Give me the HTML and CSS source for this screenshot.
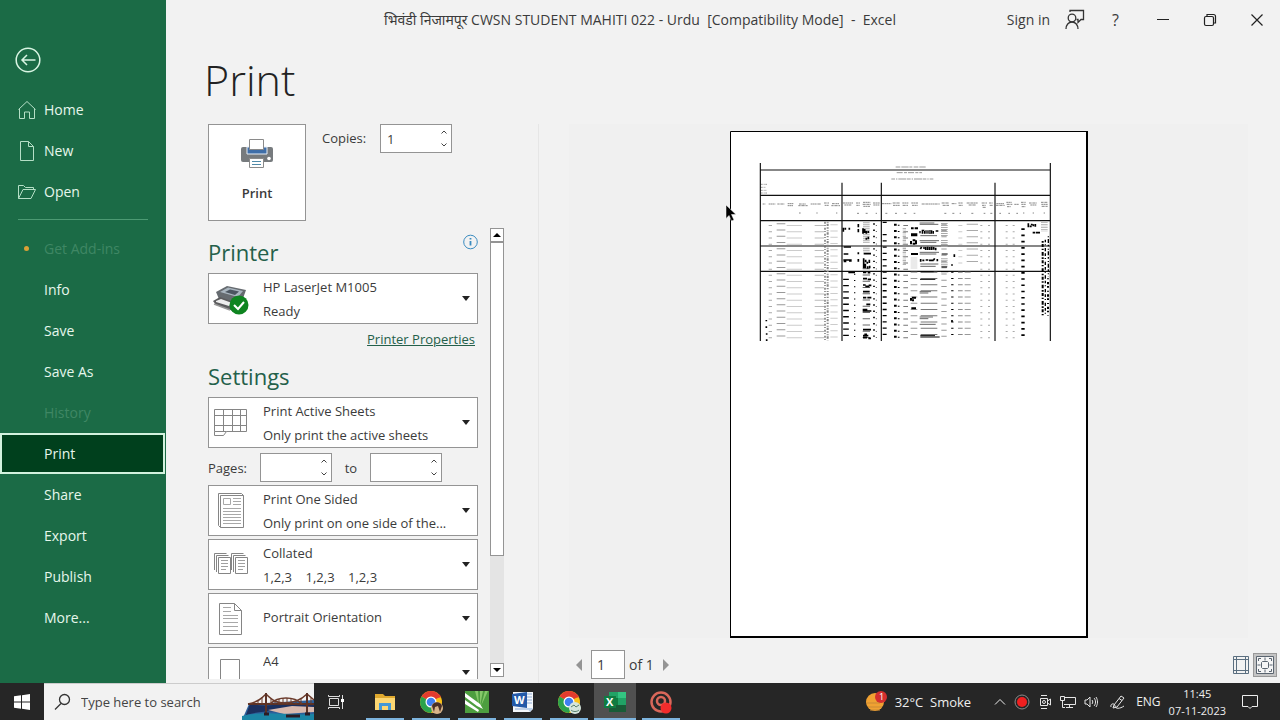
FILE: index.html
```html
<!DOCTYPE html>
<html lang="en">

<head>
  <meta charset="UTF-8">
  <meta name="viewport" content="width=device-width, initial-scale=1.0">
  <title>Print - Excel</title>
  <link rel="stylesheet" href="styles.css">
</head>

<body>
  <div class="backstage">
    <header class="titlebar">
      <div class="doc-title">भिवंडी निजामपूर CWSN STUDENT MAHITI 022 - Urdu&nbsp; [Compatibility Mode]&nbsp; -&nbsp; Excel</div>
      <div class="window-controls">
        <button class="sign-in">Sign in</button>
        <button class="feedback" aria-label="Feedback">
          <svg width="22" height="22" viewBox="0 0 22 22" fill="none" stroke="#333" stroke-width="1.3">
            <circle cx="8" cy="9" r="3.8" />
            <path d="M2 20c0-4 2.5-7 6-7s6 3 6 7M6 3V1.5h13.5v9H17l-3 3v-3h-1.5" />
          </svg>
        </button>
        <button class="win-btn help" aria-label="Help">?</button>
        <button class="win-btn" aria-label="Minimize">
          <svg width="14" height="14" viewBox="0 0 14 14" stroke="#222"><path d="M1 6.5h12" /></svg>
        </button>
        <button class="win-btn" aria-label="Restore">
          <svg width="14" height="14" viewBox="0 0 14 14" fill="none" stroke="#222" stroke-width="1.2">
            <rect x="1.5" y="3.5" width="9" height="9" rx="1.5" />
            <path d="M4 3V1.5h6.5a2 2 0 0 1 2 2V10H11" />
          </svg>
        </button>
        <button class="win-btn" aria-label="Close">
          <svg width="14" height="14" viewBox="0 0 14 14" stroke="#222" stroke-width="1.2"><path d="M1.5 1.5l11 11M12.5 1.5l-11 11" /></svg>
        </button>
      </div>
    </header>

    <nav class="sidebar">
      <button class="back" aria-label="Back">
        <svg width="26" height="26" viewBox="0 0 26 26" fill="none" stroke="#d9f5e3" stroke-width="1.5">
          <circle cx="13" cy="13" r="11.8" />
          <path d="M20.5 13H7M12 8l-5 5 5 5" />
        </svg>
      </button>
      <a class="nav-item" href="#">
        <svg class="nav-icon" width="20" height="20" viewBox="0 0 20 20" fill="none" stroke="#b5dfc6"><path d="M1.5 9.5L10 1.5l8.5 8M2.5 9v9.5h5V12h5v6.5h5V9" /></svg>
        Home
      </a>
      <a class="nav-item" href="#">
        <svg class="nav-icon" width="20" height="20" viewBox="0 0 20 20" fill="none" stroke="#b5dfc6"><path d="M3.5.5h8l5 5v14h-13zM11.5.5v5h5" /></svg>
        New
      </a>
      <a class="nav-item" href="#">
        <svg class="nav-icon" width="20" height="20" viewBox="0 0 20 20" fill="none" stroke="#b5dfc6"><path d="M1.5 16.5v-13h5l2 2h8V8M1.5 16.5L6 7.5h12.5l-4.500 9z" /></svg>
        Open
      </a>
      <hr class="nav-divider">
      <a class="nav-item disabled addins" href="#">Get Add-ins</a>
      <a class="nav-item" href="#">Info</a>
      <a class="nav-item" href="#">Save</a>
      <a class="nav-item" href="#">Save As</a>
      <a class="nav-item disabled" href="#">History</a>
      <a class="nav-item selected" href="#">Print</a>
      <a class="nav-item" href="#">Share</a>
      <a class="nav-item" href="#">Export</a>
      <a class="nav-item" href="#">Publish</a>
      <a class="nav-item" href="#">More...</a>
    </nav>

    <main class="content">
      <h1>Print</h1>
      <div class="columns">
        <section class="print-pane">
          <div class="print-top">
            <button class="print-btn">
              <svg width="34" height="30" viewBox="0 0 34 30">
                <rect x="1" y="8" width="32" height="15" rx="2" fill="#777b7e" />
                <path d="M7 8h20v7H7z" fill="#3f6ea8" stroke="#e8eef5" />
                <path d="M9.5.5h14v10h-14z" fill="#fff" stroke="#8a8a8a" />
                <circle cx="29" cy="19.5" r="1.8" fill="#fff" />
                <path d="M9.5 19.5h14v9h-14z" fill="#fff" stroke="#8a8a8a" />
                <path d="M12 22.5h9M12 25.5h9" stroke="#4f8aa8" />
              </svg>
              Print
            </button>
            <label class="copies-label" for="copies">Copies:</label>
            <div class="spinner">
              <input type="text" id="copies" value="1">
              <div class="spin-btns">
                <button aria-label="More copies"><svg width="6" height="4" viewBox="0 0 6 4"><path d="M.5 3.500L3 1l2.500 2.500" /></svg></button>
                <button aria-label="Fewer copies"><svg width="6" height="4" viewBox="0 0 6 4"><path d="M.5.5L3 3 5.500.5" /></svg></button>
              </div>
            </div>
          </div>

          <div class="scroll-row">
            <div class="options">
              <div class="section-head">
                <h2>Printer</h2>
                <svg class="info" width="15" height="16" viewBox="0 0 15 16" fill="none" stroke="#3b8cc0">
                  <circle cx="7.5" cy="8" r="6.8" />
                  <path d="M7.5 7v4.500M7.5 4v1.500" stroke-width="1.8" />
                </svg>
              </div>
              <div class="combo">
                <select aria-label="Printer"><option>HP LaserJet M1005</option></select>
                <span class="combo-sub">Ready</span>
                <svg class="combo-icon" width="38" height="38" viewBox="0 0 38 38">
                  <path d="M4 12L15 6l19 4-5 14-22-5z" fill="#666b70" />
                  <path d="M8 12l8-4.500 15 3.500-5 6z" fill="#a9b5bf" />
                  <path d="M13 12l5-2.500 9 2-4 3.500z" fill="#4b5560" />
                  <path d="M1 21l7-4 17 6-4 8-17-6z" fill="#5c5c5e" />
                  <path d="M4 21l5-2 11 4-3 3-13-4z" fill="#eee" />
                  <path d="M2 24l16 6" stroke="#999" stroke-width="1.5" />
                  <circle cx="27" cy="25" r="9.5" fill="#0e8420" />
                  <path d="M22 25l4 4 6-7" fill="none" stroke="#fff" stroke-width="2" />
                </svg>
              </div>
              <a class="props-link" href="#">Printer Properties</a>

              <h2>Settings</h2>
              <div class="combo">
                <select aria-label="Print what"><option>Print Active Sheets</option></select>
                <span class="combo-sub">Only print the active sheets</span>
                <svg class="combo-icon" width="38" height="38" viewBox="0 0 38 38" fill="none" stroke="#858585">
                  <path d="M2.5 27.5v-22h32v22h-20l-3 4h-9v-4h12M2.5 11.500h32M2.5 21.500h32M11.5 5.500v22M20.5 5.500v22M28.5 5.500v22" />
                </svg>
              </div>
              <div class="pages-row">
                <label for="pageFrom">Pages:</label>
                <div class="spinner">
                  <input type="text" id="pageFrom">
                  <div class="spin-btns">
                    <button aria-label="From up"><svg width="6" height="4" viewBox="0 0 6 4"><path d="M.5 3.500L3 1l2.500 2.500" /></svg></button>
                    <button aria-label="From down"><svg width="6" height="4" viewBox="0 0 6 4"><path d="M.5.5L3 3 5.500.5" /></svg></button>
                  </div>
                </div>
                <label for="pageTo">to</label>
                <div class="spinner">
                  <input type="text" id="pageTo">
                  <div class="spin-btns">
                    <button aria-label="To up"><svg width="6" height="4" viewBox="0 0 6 4"><path d="M.5 3.500L3 1l2.500 2.500" /></svg></button>
                    <button aria-label="To down"><svg width="6" height="4" viewBox="0 0 6 4"><path d="M.5.5L3 3 5.500.5" /></svg></button>
                  </div>
                </div>
              </div>
              <div class="combo-stack">
                <div class="combo">
                  <select aria-label="Sides"><option>Print One Sided</option></select>
                  <span class="combo-sub">Only print on one side of the...</span>
                  <svg class="combo-icon" width="38" height="38" viewBox="0 0 38 38" fill="none" stroke="#858585">
                    <path d="M8.5 35.500l-2-2v-32h23l2 2M8.5 3.500h23v32h-23z" />
                    <path d="M11.5 6.500h7v6h-7zM21 6.500h8M21 9.500h8M21 12.500h8M11 16.500h18M11 19.500h18M11 22.500h18M11 25.500h18M11 28.500h18M11 31.500h18" stroke="#a8a8a8" />
                  </svg>
                </div>
                <div class="combo">
                  <select aria-label="Collation"><option>Collated</option></select>
                  <span class="combo-sub">1,2,3&nbsp; &nbsp; 1,2,3&nbsp; &nbsp; 1,2,3</span>
                  <svg class="combo-icon" width="38" height="38" viewBox="0 0 38 38" fill="none" stroke="#858585">
                    <path d="M2.5 24V7.500h12M4.5 26V9.500h12M6.5 11.500h12v16h-12zM19.5 24V7.500h12M21.5 26V9.500h12M23.5 11.500h12v16h-12z" />
                    <path d="M9 14.500h7M9 17.500h7M9 20.500h7M9 23.500h5M26 14.500h7M26 17.500h7M26 20.500h7M26 23.500h5" stroke="#a0a0a0" />
                  </svg>
                </div>
                <div class="combo single">
                  <select aria-label="Orientation"><option>Portrait Orientation</option></select>
                  <svg class="combo-icon" width="38" height="38" viewBox="0 0 38 38" fill="none" stroke="#858585">
                    <path d="M7.5 3.500h15l7 7v24h-22zM22.5 3.500v7h7" />
                    <path d="M11 7.500h8M11 11.500h8M11 15.500h15M11 18.500h15M11 22.500h15M11 26.500h15M11 30.500h15" stroke="#a8a8a8" />
                  </svg>
                </div>
                <div class="combo">
                  <select aria-label="Paper size"><option>A4</option></select>
                  <svg class="combo-icon" width="38" height="38" viewBox="0 0 38 38" fill="none" stroke="#858585"><path d="M8.5 5.500h19v28h-19z" /></svg>
                </div>
              </div>
            </div>
            <div class="scrollbar">
              <button aria-label="Scroll up"><svg width="8" height="4" viewBox="0 0 8 4"><path d="M0 4l4-4 4 4z" /></svg></button>
              <div class="thumb"></div>
              <button aria-label="Scroll down"><svg width="8" height="4" viewBox="0 0 8 4"><path d="M0 0h8L4 4z" /></svg></button>
            </div>
          </div>
        </section>

        <section class="preview-pane">
          <div class="preview-area">
            <svg class="sheet" viewBox="31 18 1074 1521" fill="none">
              <path d="M31 18h1074v1521H31z" fill="#fff" />
              <path d="M32.5 1539V19.500H1105" stroke="#000" stroke-width="3" />
              <path d="M34 1536h1068V20" stroke="#000" stroke-width="6" />

              <!-- table rules -->
              <path d="M122 114v534M992 114v534M367 173v475M485 173v475M826 173v475M122 135h870M122 211h870M122 287h870M122 363h870M122 439h870" stroke="#111" stroke-width="3.5" />

              <!-- sheet titles -->
              <g stroke="#999" stroke-width="3">
                <path d="M528 126h90" stroke-dasharray="14 3 22 2 9 4" />
                <path d="M531 143h76" stroke-dasharray="18 4 9 3" />
                <path d="M515 162h126" stroke-dasharray="11 3 4 3 24 2" />
                <path d="M124 178h18M124 187h14M124 196h16M124 204h19" stroke-dasharray="5 3 3 2" />
              </g>

              <!-- column headings -->
              <g stroke="#888" stroke-width="3">
                <path d="M129 237h8M147 237h20M173 237h22M204 236h18M204 242h16M238 237h20M236 242h28M273 237h31M313 234h15M315 241h13M337 236h22M335 242h26" stroke-dasharray="6 1 3 1" />
                <path d="M370 234h30M374 240h22M409 234h12M410 241h10M430 232h22M429 238h24M431 244h20M460 234h20M461 240h18M487 236h28M519 234h22M520 241h21M548 234h18M549 241h16M575 234h20M577 241h17M606 237h54M666 234h22M669 241h19M696 236h14M716 234h14M717 241h13M741 234h34M747 240h22" stroke-dasharray="7 1 4 1" />
                <path d="M786 234h16M787 241h12M789 247h10M808 234h12M810 241h10M830 236h24M829 241h26M860 232h16M861 238h17M862 245h12M884 238h14M904 232h14M905 238h14M906 245h12M928 234h24M932 240h18M964 232h20M965 238h20M966 244h18" stroke-dasharray="7 1 3 1" />
                <path d="M238 264h5M290 264h4M349 264h4M412 265h6M438 265h6M468 265h4M497 265h6M526 265h6M554 265h6M582 265h5M674 265h6M698 265h6M720 265h4M755 265h6M792 265h5M812 265h6M839 265h5M866 265h5M890 265h5M910 264h4M939 264h4M972 264h4" />
              </g>

              <!-- faint repeating cells, one dashed stroke per column -->
              <g stroke="#ccc" stroke-dasharray="3 15.7">
                <path d="M152 300v346" stroke-width="10" stroke="#aaa" />
                <path d="M184 295v346" stroke-width="26" stroke="#999" />
                <path d="M224 300v346" stroke-width="46" />
                <path d="M299 300v346" stroke-width="28" stroke="#bbb" />
                <path d="M343 298v346" stroke-width="22" />
                <path d="M673 296v346" stroke-width="16" stroke="#999" />
                <path d="M722 440v206" stroke-width="14" stroke="#888" />
                <path d="M744 440v206" stroke-width="18" stroke="#999" />
                <path d="M758 296v128" stroke-width="34" stroke="#aaa" />
                <path d="M722 300v128" stroke-width="12" />
                <path d="M785 300v346M808 300v346M861 300v346M882 300v346" stroke-width="6" stroke="#aaa" />
                <path d="M558 300v346" stroke-width="14" stroke="#777" />
                <path d="M583 440v206" stroke-width="20" stroke="#999" />
                <path d="M628 440v200" stroke-width="50" stroke="#777" />
                <path d="M440 430v216" stroke-width="22" stroke="#666" />
              </g>
              <g stroke="#666" stroke-width="13">
                <path d="M316 290v356" stroke-width="4" stroke-dasharray="6 4 3 5" />
                <path d="M324 290v356" stroke-width="6" stroke="#888" stroke-dasharray="3 3 7 4 4 5" />
                <path d="M440 292v62M440 368v14" stroke="#aaa" stroke-width="20" stroke-dasharray="3 3" />
                <path d="M554 310v110" stroke="#999" stroke-width="10" stroke-dasharray="3 4 2 3" />
                <path d="M583 398v34" stroke="#aaa" stroke-width="20" stroke-dasharray="2 4" />
                <path d="M674 294v42M674 345v20M674 400v30" stroke="#aaa" stroke-width="20" stroke-dasharray="3 3" />
                <path d="M600 294h44M600 298h56M602 332h50M600 347h58M602 352h48M600 382h58M600 387h50M602 417h54M602 424h46M600 500h34M600 504h26M600 576h40M600 581h26M600 598h48" stroke-width="3" />
                <path d="M974 292v28" stroke="#aaa" stroke-width="20" stroke-dasharray="2 3" />
              </g>

              <!-- heavy marks -->
              <g stroke="#000">
                <path d="M495 290v6M495 327v316" stroke-width="12" stroke-dasharray="4 14.7" />
                <path d="M527 296v350" stroke-width="8" stroke-dasharray="6 12.7" />
                <path d="M537 299v345" stroke-width="5" stroke-dasharray="3 15.7" />
                <path d="M910 310v332" stroke-width="10" stroke-dasharray="5 13.7" />
                <path d="M698 440v206" stroke-width="7" stroke-dasharray="3 15.7" />
                <path d="M463 295v350" stroke-width="5" stroke-dasharray="4 14.7" />
                <path d="M470 300v345" stroke-width="3" stroke-dasharray="2 16.7" />
                <path d="M405 446v196" stroke-width="4" stroke-dasharray="3 15.7" />
                <path d="M416 297v10M416 312v10M416 382v6M416 402v8" stroke-width="5" />
                <path d="M379 461v180" stroke-width="17" stroke-dasharray="4 14.7" />
                <path d="M371 308v12M377 308v6M389 308v6" stroke-width="5" />
                <path d="M372 366h22M372 387h14M371 405h25M372 409h8M388 408h8M386 442h20M430 442h10M444 443h8" stroke-width="5" />
                <path d="M430 310v16M435 312v12M440 318v8M446 318v6M440 338v6M446 335v8M432 386h22M432 400v30M438 404v8M437 416v14M443 410v6M444 424v7M449 404v10M450 422v8" stroke-width="5" />
                <path d="M430 461h12M444 463h10M430 480h8M437 484h12M447 481h8M430 500h20M430 518h10M443 518h12M429 554h14M429 558h26M440 538h12M430 614h24M430 632h16M430 638h12M434 628h8M446 640h8" stroke-width="5" />
                <path d="M574 310h8M585 310h10M574 328h19M574 331h19M574 348v10M579 346h8M579 356h8M589 346v12M574 387h21M574 519v8M577 526h6M577 518h12M575 550h14" stroke-width="6" />
                <path d="M601 318v7M606 316h8M608 318v8M614 318v8M619 316v10M625 316v10M631 315v12M636 316v10M641 318v8M648 318h8" stroke-width="4" />
                <path d="M602 372l4-6M610 369h6M618 366v9M624 365v10M630 366v9M636 365v10M642 366v8M648 368v8M603 402v8M608 406h6M618 405h8M628 406h14M645 400l-3 5M653 402v7" stroke-width="5" />
                <path d="M666 387h18M666 426h16M664 440h22M602 440h40M601 463h46M602 632h44M602 636h58" stroke-width="3" />
                <path d="M704 388v8M697 418v4M697 585v6M140 585v4M140 604v5M141 625v4M141 643v5" stroke-width="5" />
                <path d="M926 295v12M930 304h6M936 296v5M941 304v-6M947 297v8M939 323h8M949 323h12" stroke-width="5" />
                <path d="M969 348v224" stroke-width="6" stroke-dasharray="5 4 9 5 4 6 11 5" />
                <path d="M977 344v228" stroke-width="4" stroke-dasharray="8 6 3 8 10 6" />
                <path d="M986 334v120" stroke-width="4" stroke-dasharray="3 5 12 5 5 7" />
                <path d="M985 460v112" stroke-width="6" stroke-dasharray="3 8 7 5 5 9" />
              </g>
            </svg>
          </div>
          <div class="preview-footer">
            <button class="pager" aria-label="Previous page"><svg width="6" height="12" viewBox="0 0 6 12"><path d="M6 0v12L0 6z" /></svg></button>
            <input class="page-no" type="text" value="1" aria-label="Page number">
            <span>of 1</span>
            <button class="pager" aria-label="Next page"><svg width="6" height="12" viewBox="0 0 6 12"><path d="M0 0v12l6-6z" /></svg></button>
            <div class="view-btns">
              <button aria-label="Show margins">
                <svg width="16" height="18" viewBox="0 0 16 18" fill="none" stroke="#5b6f80"><path d="M.5.5h15v17H.5zM3.5.5v17M12.5.5v17M.5 3.500h15M.5 14.500h15" /></svg>
              </button>
              <button class="active" aria-label="Zoom to page">
                <svg width="18" height="18" viewBox="0 0 18 18" fill="none" stroke="#5b6570">
                  <path d="M.5.5h17v17H.5z" fill="#f5f5f5" />
                  <path d="M6.5 5.500h5l1 1v5l-1 1h-5l-1-1v-5zM9 1.500v3M9 13.500v3M1.5 9h3M13.5 9h3" />
                  <path d="M2.5 5V2.500H5M13 2.500h2.500V5M15.5 13v2.500H13M5 15.500H2.500V13" />
                </svg>
              </button>
            </div>
          </div>
        </section>
      </div>
    </main>
  </div>

  <footer class="taskbar">
    <button class="start" aria-label="Start">
      <svg width="16" height="16" viewBox="0 0 16 16" fill="#fff"><path d="M0 2.300L7 1.300v6.200H0zM8 1.200L16 0v7.500H8zM0 8.500h7v6.200l-7-1zM8 8.500h8V16l-8-1.200z" /></svg>
    </button>
    <div class="search">
      <svg width="18" height="18" viewBox="0 0 18 18" fill="none" stroke="#333" stroke-width="1.3"><circle cx="10.5" cy="6.5" r="5" /><path d="M7 10.500l-6 6" /></svg>
      <input type="text" placeholder="Type here to search" aria-label="Search">
      <svg class="bridge" width="72" height="36" viewBox="2 0 72 36" fill="none">
        <path d="M9 20L74 16v20H2z" fill="#2c5f9a" />
        <path d="M10 20c18 4 40-2 64 1v6c-24 4-40-4-68 4z" fill="#1b2f5e" />
        <path d="M28 26l24-4 22 1v5l-30 2z" fill="#d9b9ae" />
        <path d="M2 32c22-6 46 0 72-2v6H0z" fill="#1c86a6" />
        <path d="M8 20h66" stroke="#5b3226" stroke-width="2" />
        <path d="M8 20C18 18 22 14 26 10c6 6 10 9 18 9 10 0 18-4 23-9l7 6" stroke="#6b3a2a" stroke-width="1.5" />
        <path d="M30 20c8-8 24-8 32 0" stroke="#6b3a2a" stroke-width="1.5" />
        <path d="M14 19v-1M18 20v-4M22 20v-7M31 20v-5M35 20v-4M39 20v-5M43 20v-6M47 20v-6M51 20v-5M56 20v-3M61 20v-6M71 20v-6" stroke="#6b3a2a" />
        <path d="M26 9v21M67 9v21" stroke="#5b3226" stroke-width="2" />
        <path d="M24 30h5M65 30h5M46 32h14" stroke="#2b1b25" stroke-width="3" />
      </svg>
    </div>
    <button class="task-view" aria-label="Task view">
      <svg width="16" height="16" viewBox="0 0 16 16" fill="none" stroke="#ddd"><path d="M1.5 4.500h9v7h-9zM.5 1v1.500h11V1M.5 15v-1.500h11V15M14.5 1v14" /><path d="M13 5h3v3h-3z" fill="#fff" stroke="none" /></svg>
    </button>
    <div class="apps">
      <button class="app" aria-label="File Explorer">
        <svg width="22" height="22" viewBox="0 0 22 22"><path d="M1 3h8l2 2h10v14H1z" fill="#e0a92e" /><path d="M1 7h20v12H1z" fill="#fcd672" /><path d="M5 19v-7h12v7h-3v-4H8v4z" fill="#4397d6" /></svg>
      </button>
      <button class="app" aria-label="Chrome">
        <svg width="24" height="24" viewBox="0 0 24 24"><use href="#chrome" /><circle cx="18" cy="18" r="6" fill="#d9b58b" /><path d="M13 16c1-5 9-5 10 0l-2 6-2-6-3 1-1 5z" fill="#4a3026" /></svg>
      </button>
      <button class="app" aria-label="CorelDRAW">
        <svg width="24" height="24" viewBox="0 0 24 24"><path d="M0 1h24v22H0z" fill="#4d9e3f" /><path d="M14 16L10 1h3zM15 16V1h3zM16 16l4-15h3z" fill="#86c86a" /><path d="M0 3l15 11 3 5-6-3L0 7z" fill="#fff" /><path d="M0 10l14 10-1 2L0 14z" fill="#fff" /></svg>
      </button>
      <button class="app" aria-label="Word">
        <svg width="24" height="24" viewBox="0 0 24 24"><path d="M2 2h20v17l-3 3H2z" fill="#f4f7fb" /><path d="M15 4h6M15 7h6M15 10h6M15 13h6M4 19h13" stroke="#8eabd4" /><path d="M1 4l15-2v16L1 16z" fill="#2459a8" /><text class="glyph" x="3" y="14">W</text><path d="M16 18h6l-3 4z" fill="#b9cfe9" /></svg>
      </button>
      <button class="app" aria-label="Chrome">
        <svg width="24" height="24" viewBox="0 0 24 24"><use href="#chrome" /><circle cx="18" cy="18" r="6" fill="#d5e5dc" /><path d="M14 17l3-2 2 2 3-2M14 20c2 2 6 2 8 0" fill="none" stroke="#58806c" /></svg>
      </button>
      <button class="app current" aria-label="Excel">
        <svg width="24" height="24" viewBox="0 0 24 24"><path d="M6 2h9v6H6z" fill="#21a366" /><path d="M15 2h8v6h-8z" fill="#33c481" /><path d="M6 8h9v7H6z" fill="#107c41" /><path d="M15 8h8v7h-8z" fill="#21a366" /><path d="M6 15h17v7H6z" fill="#185c37" /><path d="M1 6h12v12H1z" fill="#107c41" /><text class="glyph" x="3" y="16">X</text></svg>
      </button>
      <button class="app" aria-label="Screen recorder">
        <svg width="24" height="24" viewBox="0 0 24 24" fill="none"><circle cx="12" cy="12" r="9.5" stroke="#d9675a" stroke-width="2.5" /><circle cx="12" cy="11" r="4" stroke="#d9675a" stroke-width="2.5" /><circle cx="17" cy="18" r="5.5" fill="#f22c2c" /></svg>
      </button>
    </div>
    <div class="tray">
      <button class="weather">
        <svg width="24" height="24" viewBox="0 0 24 24"><circle cx="11" cy="12" r="9" fill="#f0a132" /><path d="M3 13h13M4 17h14M6 20h10" stroke="#c98a35" /><circle cx="17" cy="7" r="6" fill="#d32f2f" /><text class="badge-no" x="15" y="10">1</text></svg>
        <span>32°C&nbsp; Smoke</span>
      </button>
      <svg width="12" height="12" viewBox="0 0 12 12" fill="none" stroke="#eee"><path d="M1 8.500l5-5 5 5" /></svg>
      <svg width="16" height="16" viewBox="0 0 16 16" fill="none"><circle cx="8" cy="8" r="7" stroke="#8a8a8a" /><circle cx="8" cy="8" r="5" fill="#f02020" /></svg>
      <svg width="14" height="16" viewBox="0 0 14 16" fill="none" stroke="#e5e5e5"><path d="M3 1.500h6M2.5 4.500h7v7h-7zM9.5 7l3-2v6l-3-2M3 14.500h6" /><circle cx="6" cy="8" r="1.5" /></svg>
      <svg width="16" height="14" viewBox="0 0 16 14" fill="none" stroke="#e5e5e5"><path d="M4 2.500h11.500v7H4M9.5 9.500v3M6 12.500h7M.5 1.500h4v4h-4zM2.5 5.500v7H5" /></svg>
      <svg width="14" height="14" viewBox="0 0 14 14" fill="none" stroke="#e5e5e5"><path d="M1 5h2l3-3v10L3 9H1z" /><path d="M8 5c1 1 1 3 0 4M10 3c2 2 2 6 0 8M12 2c2 3 2 7 0 10" /></svg>
      <svg class="pen" width="16" height="16" viewBox="0 0 16 16" fill="none" stroke="#e5e5e5"><path d="M4 11l7-9 3 2-7 9-4 1zM9 4.500l3 2M1 13c-1-4 4-4 4-1s5 3 9 0" /></svg>
      <span class="lang">ENG</span>
      <div class="clock"><span>11:45</span><span>07-11-2023</span></div>
      <svg class="notif" width="16" height="16" viewBox="0 0 16 16" fill="none" stroke="#eee"><path d="M.5 1.500h15v11H10l-2 2-2-2H.5z" /></svg>
    </div>
  </footer>

  <svg class="cursor" width="12" height="18" viewBox="0 0 12 18"><path d="M1 1v13.500l3-3 2.500 5.500 2.500-1-2.500-5.500H11z" fill="#000" stroke="#fff" stroke-width=".5" /></svg>

  <svg class="defs" width="0" height="0" aria-hidden="true">
    <symbol id="chrome" viewBox="0 0 24 24">
      <circle cx="12" cy="12" r="11" fill="#fbc116" />
      <path d="M12 12L2.5 6.500A11 11 0 0 1 21.5 6.500z" fill="#e33b2e" />
      <path d="M12 12L2.5 6.500A11 11 0 0 0 12 23l4-8z" fill="#2ba24c" />
      <path d="M12 6.500h9.500" stroke="#e33b2e" stroke-width="2" />
      <circle cx="12" cy="12" r="5.5" fill="#fff" />
      <circle cx="12" cy="12" r="4.3" fill="#3f7ff0" />
    </symbol>
  </svg>
</body>

</html>
```
FILE: styles.css
```css
:root {
  --green: #1b6b46;
  --green-dark: #00401d;
  --heading: #24604a;
  --page-bg: #f2f2f2;
  --text: #3b3b3b;
  --border: #949494;
  --taskbar: #262626;
}

* {
  box-sizing: border-box;
}

body {
  margin: 0;
  height: 100vh;
  display: flex;
  flex-direction: column;
  overflow: hidden;
  background: var(--page-bg);
  color: var(--text);
  font-family: "Open Sans", "Noto Sans", sans-serif;
  font-size: 14px;
  line-height: 20px;
}

button,
input,
select {
  font: inherit;
  color: inherit;
  margin: 0;
  padding: 0;
  border: none;
  background: none;
  border-radius: 0;
}

svg {
  display: block;
  flex: none;
}

.backstage {
  flex: 1;
  min-height: 0;
  display: grid;
  grid-template-columns: 166px 1fr;
  grid-template-rows: 40px minmax(0, 1fr);
}

/* Title bar */
.titlebar {
  grid-column: 1 / -1;
  grid-row: 1;
  z-index: 1;
  display: grid;
  grid-template-columns: 1fr auto 1fr;
  align-items: center;
}

.doc-title {
  grid-column: 2;
  white-space: pre;
}

.window-controls {
  justify-self: end;
  display: flex;
  align-items: center;
}

.sign-in {
  margin-right: 8px;
}

.feedback {
  width: 34px;
  display: flex;
  justify-content: center;
}

.win-btn {
  width: 47px;
  height: 40px;
  display: flex;
  align-items: center;
  justify-content: center;
}

.help {
  font-size: 16px;
}

/* Sidebar */
.sidebar {
  grid-column: 1;
  grid-row: 1 / -1;
  background: var(--green);
  display: flex;
  flex-direction: column;
  padding-top: 47px;
}

.back {
  align-self: flex-start;
  margin: 0 0 16px 15px;
}

.nav-item {
  display: flex;
  align-items: center;
  height: 41px;
  padding-left: 44px;
  color: #e6f7ec;
  text-decoration: none;
}

.nav-icon {
  margin: 0 7px 0 -27px;
}

.nav-divider {
  width: 130px;
  margin: 7px 0 8px 18px;
  border: none;
  border-top: 1px solid #4c9a73;
}

.nav-item.disabled {
  color: #3f8764;
}

.addins::before {
  content: "";
  width: 5px;
  height: 5px;
  margin: 0 15px 0 -20px;
  border-radius: 50%;
  background: #dba136;
}

.nav-item.selected {
  background: var(--green-dark);
  border: 2px solid #d3f2de;
  padding-left: 42px;
  margin-right: 1px;
}

/* Content */
.content {
  grid-column: 2;
  grid-row: 2;
  display: flex;
  flex-direction: column;
  padding-left: 42px;
}

h1 {
  margin: 0 0 0 -4px;
  height: 84px;
  font-size: 43px;
  font-weight: 300;
  line-height: 80px;
  color: #222;
}

h2 {
  margin: 0;
  font-size: 22px;
  font-weight: 400;
  line-height: 38px;
  color: var(--heading);
}

.columns {
  flex: 1;
  min-height: 0;
  display: flex;
}

.print-pane {
  width: 331px;
  border-right: 1px solid #e6e6e6;
  display: flex;
  flex-direction: column;
  font-size: 13px;
}

.print-top {
  display: flex;
  align-items: flex-start;
}

.print-btn {
  width: 98px;
  height: 97px;
  border: 1px solid var(--border);
  background: #fff;
  font-weight: 600;
  display: flex;
  flex-direction: column;
  align-items: center;
  gap: 14px;
  padding-top: 14px;
}

.copies-label {
  flex: none;
  width: 58px;
  margin-left: 16px;
  padding: 4px 0;
}

.spinner {
  display: flex;
  width: 72px;
  height: 29px;
  border: 1px solid var(--border);
  background: #fff;
}

.spinner input {
  flex: 1;
  min-width: 0;
  padding-left: 6px;
}

.spin-btns {
  display: flex;
  flex-direction: column;
  width: 14px;
}

.spin-btns button {
  flex: 1;
  display: flex;
  align-items: center;
  justify-content: center;
}

.spin-btns svg {
  fill: none;
  stroke: #444;
}

.scroll-row {
  flex: 1;
  min-height: 0;
  display: flex;
  gap: 12px;
  padding-top: 7px;
  margin-bottom: 4px;
}

.options {
  width: 270px;
  overflow: hidden;
  display: flex;
  flex-direction: column;
}

.options > * {
  flex: none;
}

.section-head {
  display: flex;
  justify-content: space-between;
  height: 45px;
  padding-top: 5px;
}

.info {
  margin-top: 1px;
}

.combo {
  display: grid;
  grid-template-columns: 54px 1fr 24px;
  grid-template-rows: 25px 24px;
  height: 51px;
  border: 1px solid var(--border);
  background: #fff url("data:image/svg+xml,%3Csvg xmlns='http://www.w3.org/2000/svg' width='8' height='5'%3E%3Cpath d='M0 0h8L4 5z' fill='%23222'/%3E%3C/svg%3E") no-repeat right 7px center;
}

.combo select {
  grid-area: 1 / 1 / 3 / 4;
  appearance: none;
  padding: 0 24px 24px 54px;
}

.combo.single select {
  padding-bottom: 4px;
}

.combo-icon {
  grid-area: 1 / 1 / 3 / 2;
  align-self: center;
  margin-left: 3px;
  pointer-events: none;
}

.combo-sub {
  grid-area: 2 / 2 / 3 / 3;
  line-height: 24px;
  white-space: pre;
  pointer-events: none;
}

.props-link {
  align-self: flex-end;
  margin: 5px 3px 13px 0;
  color: var(--heading);
  text-decoration: underline;
}

.options > h2 {
  height: 35px;
  line-height: 29px;
}

.pages-row {
  display: flex;
  align-items: center;
  justify-content: space-between;
  width: 234px;
  padding: 5px 0 3px;
}

.combo-stack {
  display: flex;
  flex-direction: column;
  gap: 3px;
}

.scrollbar {
  width: 14px;
  height: 449px;
  display: flex;
  flex-direction: column;
  background: #e4e4e4;
}

.scrollbar button {
  height: 14px;
  border: 1px solid var(--border);
  background: #fff;
  display: flex;
  align-items: center;
  justify-content: center;
}

.thumb {
  height: 70%;
  margin-bottom: auto;
  border: 1px solid var(--border);
  background: #fff;
}

/* Preview */
.preview-pane {
  flex: 1;
  min-width: 0;
  display: flex;
  flex-direction: column;
}

.preview-area {
  flex: 1;
  min-height: 0;
  display: flex;
  justify-content: center;
  margin: 0 32px 0 30px;
  padding-top: 7px;
  background: #f0f0f0;
}

.sheet {
  height: 100%;
}

.preview-footer {
  display: flex;
  align-items: center;
  height: 45px;
  padding: 8px 3px 0 32px;
}

.pager {
  width: 16px;
  display: flex;
  justify-content: center;
}

.pager svg {
  fill: #949494;
}

.page-no {
  width: 34px;
  height: 29px;
  margin: 0 4px;
  padding-left: 5px;
  border: 1px solid var(--border);
  background: #fff;
}

.preview-footer span {
  margin-right: 4px;
}

.view-btns {
  display: flex;
  margin-left: auto;
}

.view-btns button {
  width: 24px;
  height: 24px;
  display: flex;
  align-items: center;
  justify-content: center;
}

.view-btns .active {
  background: #c4c4c4;
  border: 1px solid #999;
}

/* Taskbar */
.taskbar {
  display: flex;
  height: 37px;
  background: var(--taskbar);
  color: #eee;
  font-size: 13px;
}

.start,
.task-view {
  width: 44px;
  display: flex;
  align-items: center;
  justify-content: center;
}

.search {
  width: 270px;
  display: flex;
  align-items: center;
  padding-left: 10px;
  gap: 9px;
  background: #f2f2f2;
  border-top: 1px solid #ccc;
}

.search input {
  flex: 1;
  min-width: 0;
}

.search input::placeholder {
  color: #444;
  opacity: 1;
}

.apps {
  display: flex;
  gap: 4px;
  margin-left: 6px;
}

.app {
  width: 42px;
  display: flex;
  align-items: center;
  justify-content: center;
  background: linear-gradient(#7db4de, #7db4de) no-repeat center bottom / 38px 2px;
}

.app.current {
  background-color: #505050;
  background-size: 100% 2px;
}

.glyph {
  fill: #fff;
  font-size: 11px;
  font-weight: 700;
}

.badge-no {
  fill: #fff;
  font-size: 9px;
}

.tray {
  margin-left: auto;
  display: flex;
  align-items: center;
  gap: 8px;
  padding-right: 22px;
}

.weather {
  display: flex;
  align-items: center;
  gap: 7px;
  margin-right: 15px;
}

.pen {
  margin-left: 4px;
}

.lang {
  margin-left: 2px;
  font-size: 12px;
}

.clock {
  display: flex;
  flex-direction: column;
  align-items: center;
  font-size: 11px;
  line-height: 17px;
}

.notif {
  margin-left: 8px;
}

.cursor {
  position: absolute;
  left: 725px;
  top: 204px;
}

.defs {
  position: absolute;
}
```
